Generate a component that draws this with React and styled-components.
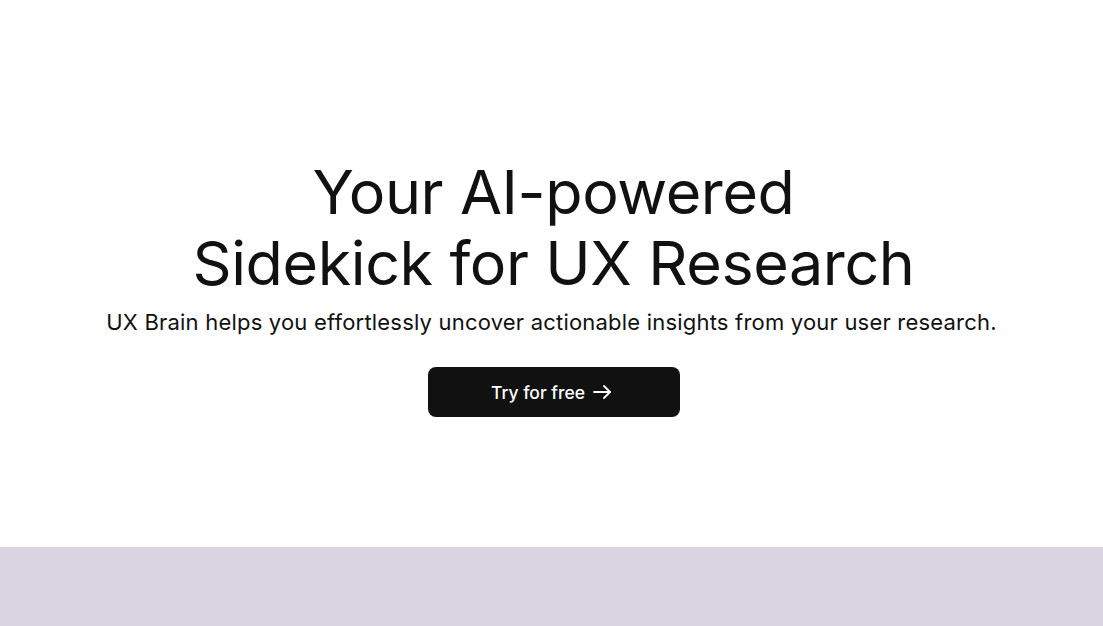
import React from "react";
import styled, { createGlobalStyle } from "styled-components";

const Global = createGlobalStyle`
  html, body { margin: 0; padding: 0; background: #fff; }
  body { font-family: Inter, "Noto Sans", sans-serif; color: #111; }
`;

const Hero = styled.section`
  height: 547px;
  box-sizing: border-box;
  display: flex;
  flex-direction: column;
  align-items: center;
  padding-top: 157px;
`;

const Title = styled.h1`
  margin: 0 0 0 4px;
  font-size: 61px;
  line-height: 71px;
  font-weight: 400;
  letter-spacing: -0.4px;
  text-align: center;
  color: #111;
`;

const Subtitle = styled.p`
  margin: 7px 0 0;
  font-size: 22px;
  line-height: 32px;
  font-weight: 400;
  letter-spacing: 0.2px;
  color: #111;
  text-align: center;
`;

const Button = styled.button`
  margin: 29px 0 0 4px;
  width: 252px;
  height: 50px;
  border: none;
  border-radius: 8px;
  background: #111;
  color: #fff;
  font-family: Inter, sans-serif;
  font-size: 17.5px;
  font-weight: 500;
  display: flex;
  align-items: center;
  justify-content: center;
  gap: 8px;
  padding: 0 5px 0 0;
  cursor: pointer;
`;

const Band = styled.section`
  height: 79px;
  background: #d9d4e1;
`;

const Arrow = () => (
  <svg width="18" height="14" viewBox="0 0 18 14" fill="none" stroke="#fff" strokeWidth="1.8" strokeLinecap="round" strokeLinejoin="round">
    <path d="M1 7h16" />
    <path d="M11 1l6 6-6 6" />
  </svg>
);

export default function App() {
  return (
    <>
      <Global />
      <Hero>
        <Title>
          Your AI-powered
          <br />
          Sidekick for UX Research
        </Title>
        <Subtitle>UX Brain helps you effortlessly uncover actionable insights from your user research.</Subtitle>
        <Button>
          Try for free <Arrow />
        </Button>
      </Hero>
      <Band />
    </>
  );
}
